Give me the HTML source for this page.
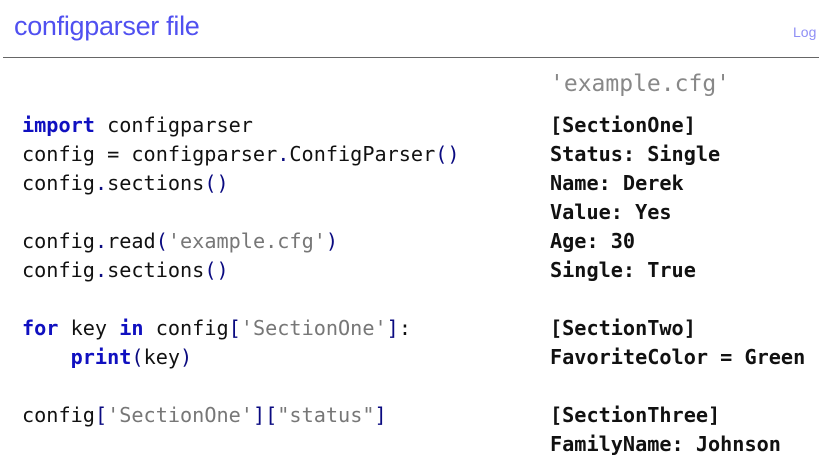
<!DOCTYPE html>
<html><head><style>
body{margin:0;width:819px;height:474px;background:#fff;position:relative;overflow:hidden;font-family:"Liberation Sans",sans-serif}
.t{position:absolute;left:14px;top:11px;font-size:27px;color:#5050f0;letter-spacing:-0.3px}
.log{position:absolute;left:793px;top:24px;font-size:14px;color:#8f8ff5}
.hr{position:absolute;left:3px;top:57px;width:816px;height:1px;background:#666}
.c{position:absolute;font-family:"DejaVu Sans Mono",monospace;font-size:20.2px;line-height:29px;white-space:pre;color:#111}
.k{color:#1010c0;font-weight:bold}
.p{color:#0a0a80}
.s{color:#777}
.r{font-weight:bold}
</style></head><body>
<div class="t">configparser file</div>
<div class="log">Log</div>
<div class="hr"></div>
<div class="c" style="left:550px;top:70px;font-size:23px;color:#888">'example.cfg'</div>
<div class="c" style="left:22px;top:111px"><span class="k">import</span> configparser
config = configparser<span class="p">.</span>ConfigParser<span class="p">()</span>
config<span class="p">.</span>sections<span class="p">()</span>

config<span class="p">.</span>read<span class="p">(</span><span class="s">'example.cfg'</span><span class="p">)</span>
config<span class="p">.</span>sections<span class="p">()</span>

<span class="k">for</span> key <span class="k">in</span> config<span class="p">[</span><span class="s">'SectionOne'</span><span class="p">]</span>:
    <span class="k">print</span><span class="p">(</span>key<span class="p">)</span>

config<span class="p">[</span><span class="s">'SectionOne'</span><span class="p">][</span><span class="s">"status"</span><span class="p">]</span></div>
<div class="c r" style="left:550px;top:111px">[SectionOne]
Status: Single
Name: Derek
Value: Yes
Age: 30
Single: True

[SectionTwo]
FavoriteColor = Green

[SectionThree]
FamilyName: Johnson</div>
</body></html>
